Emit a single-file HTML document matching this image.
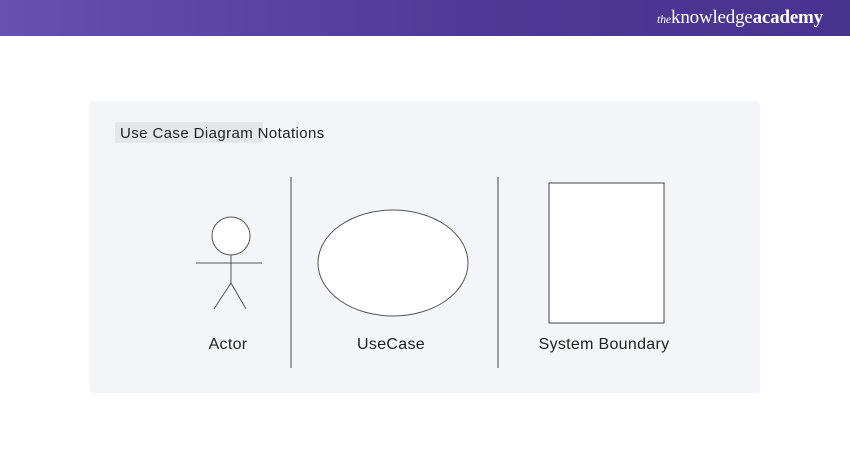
<!DOCTYPE html>
<html><head><style>
body{margin:0;width:850px;height:450px;background:#fff;position:relative;overflow:hidden;font-family:"Liberation Sans",sans-serif}
.hd{position:absolute;left:0;top:0;width:850px;height:36px;background:linear-gradient(90deg,#6650b0,#4d3894 60%,#47348f)}
.logo{position:absolute;right:27px;top:7px;color:#fff;font-family:"Liberation Serif",serif;font-size:19px;letter-spacing:-0.2px}
.logo i{font-size:12px}
.logo b{font-weight:bold}
</style></head><body>
<div class="hd"><div class="logo"><i>the</i>knowledge<b>academy</b></div></div>
<svg style="position:absolute;left:0;top:0" width="850" height="450">
<rect x="90" y="101" width="670" height="292" rx="3" fill="#f4f5f8"/>
<rect x="115" y="122" width="148" height="21" fill="#e6e7ea"/>
<text x="120" y="138" font-size="15" letter-spacing="0.4" fill="#222" font-family="Liberation Sans">Use Case Diagram Notations</text>
<line x1="291" y1="177" x2="291" y2="368" stroke="#666" stroke-width="1.2"/>
<line x1="498" y1="177" x2="498" y2="368" stroke="#666" stroke-width="1.2"/>
<g stroke="#555" stroke-width="1" fill="none">
<circle cx="231" cy="236" r="19" fill="#fff"/>
<line x1="231" y1="255" x2="231" y2="283"/>
<line x1="196" y1="263" x2="262" y2="263"/>
<line x1="231" y1="283" x2="214" y2="309"/>
<line x1="231" y1="283" x2="246" y2="309"/>
<ellipse cx="393" cy="263" rx="75" ry="53" fill="#fff"/>
<rect x="549" y="183" width="115" height="140" fill="#fff" stroke="#444"/>
</g>
<g font-size="16" letter-spacing="0.3" fill="#222" font-family="Liberation Sans" text-anchor="middle">
<text x="228" y="349">Actor</text>
<text x="391" y="349">UseCase</text>
<text x="604" y="349">System Boundary</text>
</g>
</svg>
</body></html>
